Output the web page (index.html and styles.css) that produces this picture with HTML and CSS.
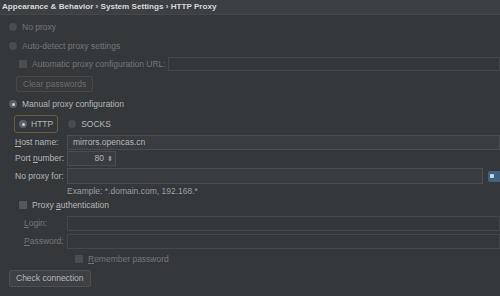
FILE: index.html
```html
<!DOCTYPE html>
<html lang="en">
<head>
    <meta charset="UTF-8">
    <title>HTTP Proxy</title>
    <link rel="stylesheet" href="styles.css">
</head>
<body>
    <div class="header">Appearance &amp; Behavior › System Settings › HTTP Proxy</div>

    <div class="content">
        <div class="row r-noproxy disabled"><span class="radio"></span><span>No proxy</span></div>
        <div class="row r-auto disabled"><span class="radio"></span><span>Auto-detect proxy settings</span></div>
        <div class="row r-url disabled indent">
            <span class="check"></span><span>Automatic proxy configuration URL:</span>
            <span class="field field-off url-field"></span>
        </div>
        <div class="row r-clear">
            <span class="btn btn-off">Clear passwords</span>
        </div>

        <div class="row r-manual"><span class="radio on"></span><span>Manual proxy configuration</span></div>
        <div class="row r-type">
            <span class="focus"><span class="radio on"></span><span>HTTP</span></span>
            <span class="socks"><span class="radio"></span><span>SOCKS</span></span>
        </div>

        <div class="row r-host">
            <span class="label"><u>H</u>ost name:</span>
            <span class="field grow">mirrors.opencas.cn</span>
        </div>
        <div class="row r-port">
            <span class="label">Port <u>n</u>umber:</span>
            <span class="field port">80<span class="spin">⬍</span></span>
        </div>
        <div class="row r-noproxyfor">
            <span class="label">No proxy for:</span>
            <span class="field grow"></span>
            <span class="expand"><span class="expand-dot"></span></span>
        </div>
        <div class="row r-example"><span class="hint">Example: *.domain.com, 192.168.*</span></div>

        <div class="row r-auth indent"><span class="check on"></span><span>Proxy <u>a</u>uthentication</span></div>
        <div class="row r-login disabled">
            <span class="label sub"><u>L</u>ogin:</span>
            <span class="field field-off grow"></span>
        </div>
        <div class="row r-pass disabled">
            <span class="label sub"><u>P</u>assword:</span>
            <span class="field field-off grow"></span>
        </div>
        <div class="row r-remember disabled"><span class="check"></span><span><u>R</u>emember password</span></div>

        <div class="row r-check"><span class="btn">Check connection</span></div>
    </div>
</body>
</html>
```

FILE: styles.css
```css
body {
    margin: 0;
    background-color: #35383a;
    font-family: 'Liberation Sans', Arial, sans-serif;
    font-size: 8.5px;
    color: #b4b6b8;
    overflow: hidden;
}

u {
    text-decoration: underline;
    text-underline-offset: 1px;
}

.header {
    height: 14px;
    line-height: 14px;
    padding-left: 2px;
    background-color: #3d4043;
    border-bottom: 1px solid #44474a;
    color: #d6d8da;
    font-weight: 700;
    font-size: 8.1px;
    white-space: nowrap;
}

.content {
    padding-left: 9px;
}

.row {
    display: flex;
    align-items: center;
    white-space: nowrap;
}

.disabled {
    color: #74777a;
}

.indent {
    padding-left: 10px;
}

.radio {
    width: 8px;
    height: 8px;
    border-radius: 50%;
    background-color: #4a4d50;
    margin-right: 5px;
    flex: none;
    position: relative;
}

.radio.on {
    background-color: #5d6164;
}

.radio.on::after {
    content: "";
    position: absolute;
    left: 2.5px;
    top: 2.5px;
    width: 3px;
    height: 3px;
    border-radius: 50%;
    background-color: #d0d2d4;
}

.check {
    width: 8px;
    height: 8px;
    border-radius: 1px;
    background-color: #4c4f52;
    margin-right: 5px;
    flex: none;
}

.check.on {
    background-color: #54585b;
}

.field {
    box-sizing: border-box;
    height: 15px;
    line-height: 13px;
    background-color: #3a3d3f;
    border: 1px solid #4b4e51;
    padding: 0 5px;
    color: #b4b6b8;
}

.field-off {
    background-color: #35383a;
    border-color: #45484b;
}

.grow {
    flex: 1;
}

.btn {
    box-sizing: border-box;
    display: inline-block;
    height: 17px;
    line-height: 15px;
    padding: 0 6px;
    border: 1px solid #4d5053;
    background-color: #3e4144;
    border-radius: 2px;
    color: #b4b6b8;
}

.btn-off {
    height: 16px;
    line-height: 14px;
    background-color: #37393b;
    border-color: #46494c;
    color: #6c6f72;
}

.label {
    box-sizing: border-box;
    width: 58px;
    padding-left: 6px;
    flex: none;
}

.label.sub {
    padding-left: 15px;
}

.r-noproxy { height: 18px; margin-top: 3px; }
.r-auto { height: 20px; }
.r-url { height: 16px; }
.url-field {
    flex: 1;
    margin-left: 2px;
    height: 14px;
}
.r-clear { height: 17px; margin-top: 3px; padding-left: 7px; }
.r-manual { height: 20px; margin-top: 2px; }

.r-type { height: 20px; padding-left: 5px; }
.focus {
    display: flex;
    align-items: center;
    height: 16px;
    padding: 0 4px;
    border: 1px solid #6c5937;
    border-radius: 3px;
}
.focus .radio {
    margin-right: 4px;
}
.socks {
    display: flex;
    align-items: center;
    margin-left: 10px;
}

.r-host { height: 16px; }
.r-port { height: 16px; }
.port {
    width: 49px;
    text-align: right;
    padding-right: 11px;
    position: relative;
}
.spin {
    position: absolute;
    right: 2px;
    top: 0;
    font-size: 7px;
    color: #9a9ca0;
}

.r-noproxyfor { height: 18px; margin-top: 1px; }
.r-noproxyfor .field { height: 16px; margin-right: 5px; }
.expand {
    width: 10px;
    height: 11px;
    background-color: #41627e;
    border-radius: 2px 0 0 2px;
    flex: none;
    display: flex;
    align-items: center;
    padding-left: 2px;
}
.expand-dot {
    width: 4px;
    height: 4px;
    background-color: #c9d6e2;
    border-radius: 1px;
}

.r-example { height: 11px; padding-left: 58px; }
.hint { color: #9a9c9f; }

.r-auth { height: 18px; }
.r-login { height: 18px; }
.r-pass { height: 18px; }
.r-remember { height: 18px; padding-left: 66px; }
.r-check { height: 20px; }
```
